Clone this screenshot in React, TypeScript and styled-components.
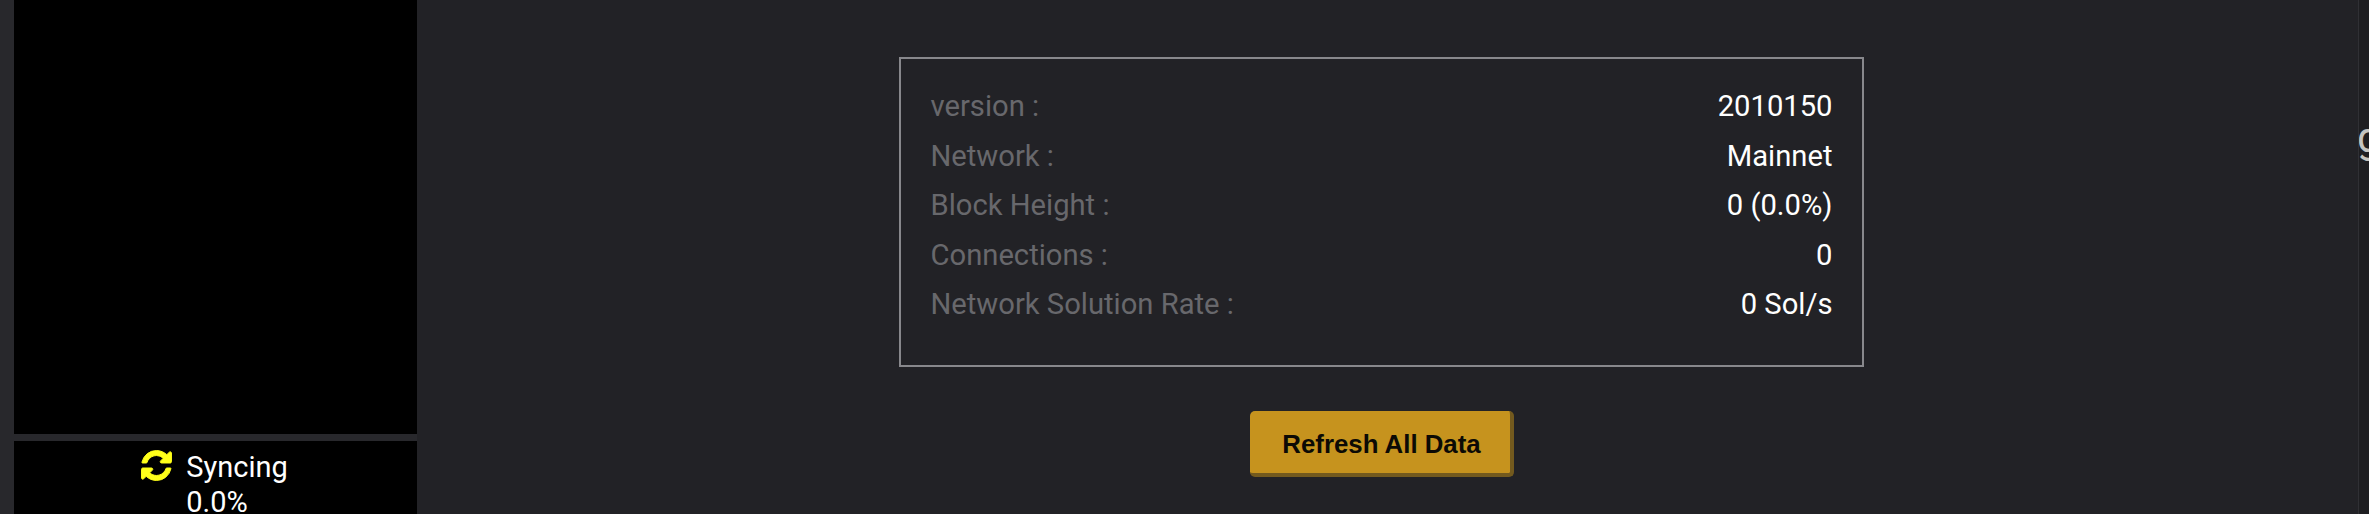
import { createGlobalStyle } from 'styled-components'
import styled from 'styled-components'

const GlobalStyle = createGlobalStyle`
  html, body {
    margin: 0;
    height: 100%;
    overflow: hidden;
    background: #222226;
    font-family: Roboto, "Liberation Sans", sans-serif;
  }
`

const Page = styled.div`
  display: flex;
  width: 2369px;
  height: 514px;
  overflow: hidden;
  background: #222226;
`
const Sidebar = styled.aside`
  flex: 0 0 417px;
  box-sizing: border-box;
  padding-left: 14px;
  display: flex;
  flex-direction: column;
  background: #28282c;
`
const BlackPanel = styled.div`
  flex: 0 0 434px;
  background: #000;
`
const SyncPanel = styled.div`
  flex: 1;
  margin-top: 7px;
  background: #000;
  color: #fff;
  font-size: 29px;
  line-height: 35px;
  display: flex;
  justify-content: center;
  overflow: hidden;
`
const SyncIcon = styled.svg`
  width: 31px;
  height: 31px;
  margin: 9px 14px 0 -2px;
  fill: #ffff1a;
  stroke: #ffff1a;
  stroke-width: 50px;
`
const SyncText = styled.div`
  padding-top: 9px;
`
const Main = styled.main`
  flex: 1;
  display: flex;
  flex-direction: column;
  align-items: center;
  padding: 57px 13px 0 0;
`
const InfoBox = styled.div`
  box-sizing: border-box;
  width: 965px;
  height: 310px;
  padding: 23px 29px 23px 30px;
  border: 2px solid #88888c;
`
const InfoRow = styled.div`
  display: flex;
  justify-content: space-between;
  height: 49.6px;
  line-height: 49.6px;
  font-size: 29.2px;
`
const InfoLabel = styled.span`
  color: #68686c;
`
const InfoValue = styled.span`
  color: #fff;
`
const RefreshButton = styled.button`
  box-sizing: border-box;
  width: 264px;
  height: 66px;
  margin: 44px 0 0 1px;
  padding: 4px 0 0 4px;
  border: none;
  border-right: 4px solid #735a1e;
  border-bottom: 4px solid #735a1e;
  border-radius: 5px;
  background: #c6931e;
  color: #0c0a05;
  font: bold 25.8px "Liberation Sans", sans-serif;
`
const EdgeStrip = styled.div`
  flex: 0 0 11px;
  box-sizing: border-box;
  border-left: 1px solid #303034;
  background: #1e1e21;
  overflow: hidden;
`
const CutOffText = styled.div`
  margin: 114px 0 0 -2px;
  color: #c4c4c0;
  font-size: 42px;
  line-height: 48px;
`

const rows = [
  ['version :', '2010150'],
  ['Network :', 'Mainnet'],
  ['Block Height :', '0 (0.0%)'],
  ['Connections :', '0'],
  ['Network Solution Rate :', '0 Sol/s'],
]

export default function App() {
  return (
    <Page>
      <GlobalStyle />
      <Sidebar>
        <BlackPanel />
        <SyncPanel>
          <SyncIcon viewBox="100 100 1592 1592">
            <path d="M1639 1056q0 5-1 7-64 268-268 434.5t-478 166.5q-146 0-282.5-55t-243.5-157l-129 129q-19 19-45 19t-45-19-19-45v-448q0-26 19-45t45-19h448q26 0 45 19t19 45-19 45l-137 137q71 66 161 102t187 36q134 0 250-65t186-179q11-17 53-117 8-23 30-23h192q13 0 22.5 9.5t9.5 22.5zm25-800v448q0 26-19 45t-45 19h-448q-26 0-45-19t-19-45 19-45l138-138q-148-137-349-137-134 0-250 65t-186 179q-11 17-53 117-8 23-30 23h-199q-13 0-22.5-9.5t-9.5-22.5v-7q65-268 270-434.5t480-166.5q146 0 284 55.5t245 156.5l130-129q19-19 45-19t45 19 19 45z" />
          </SyncIcon>
          <SyncText>
            Syncing
            <br />
            0.0%
          </SyncText>
        </SyncPanel>
      </Sidebar>
      <Main>
        <InfoBox>
          {rows.map(([label, value]) => (
            <InfoRow key={label}>
              <InfoLabel>{label}</InfoLabel>
              <InfoValue>{value}</InfoValue>
            </InfoRow>
          ))}
        </InfoBox>
        <RefreshButton>Refresh All Data</RefreshButton>
      </Main>
      <EdgeStrip>
        <CutOffText>g</CutOffText>
      </EdgeStrip>
    </Page>
  )
}
